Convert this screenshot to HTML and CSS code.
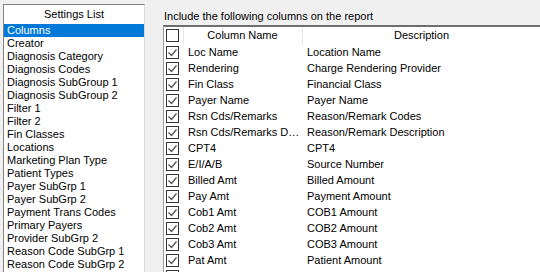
FILE: index.html
```html
<!DOCTYPE html>
<html lang="en">
<head>
    <meta charset="UTF-8">
    <title>Report Settings</title>
    <link rel="stylesheet" href="styles.css">
</head>
<body>
    <div class="window">
        <div class="settings-list">
            <div class="list-title">Settings List</div>
            <div class="list-item selected">Columns</div>
            <div class="list-item">Creator</div>
            <div class="list-item">Diagnosis Category</div>
            <div class="list-item">Diagnosis Codes</div>
            <div class="list-item">Diagnosis SubGroup 1</div>
            <div class="list-item">Diagnosis SubGroup 2</div>
            <div class="list-item">Filter 1</div>
            <div class="list-item">Filter 2</div>
            <div class="list-item">Fin Classes</div>
            <div class="list-item">Locations</div>
            <div class="list-item">Marketing Plan Type</div>
            <div class="list-item">Patient Types</div>
            <div class="list-item">Payer SubGrp 1</div>
            <div class="list-item">Payer SubGrp 2</div>
            <div class="list-item">Payment Trans Codes</div>
            <div class="list-item">Primary Payers</div>
            <div class="list-item">Provider SubGrp 2</div>
            <div class="list-item">Reason Code SubGrp 1</div>
            <div class="list-item">Reason Code SubGrp 2</div>
        </div>

        <div class="columns-panel">
            <div class="panel-label">Include the following columns on the report</div>
            <div class="grid">
                <div class="grid-row grid-header">
                    <div class="cell cell-check"><span class="checkbox"></span></div>
                    <div class="cell cell-name">Column Name</div>
                    <div class="cell cell-desc">Description</div>
                </div>
                <div id="rows"></div>
            </div>
        </div>
    </div>

    <script>
        const columns = [
            ['Loc Name', 'Location Name'],
            ['Rendering', 'Charge Rendering Provider'],
            ['Fin Class', 'Financial Class'],
            ['Payer Name', 'Payer Name'],
            ['Rsn Cds/Remarks', 'Reason/Remark Codes'],
            ['Rsn Cds/Remarks Description', 'Reason/Remark Description'],
            ['CPT4', 'CPT4'],
            ['E/I/A/B', 'Source Number'],
            ['Billed Amt', 'Billed Amount'],
            ['Pay Amt', 'Payment Amount'],
            ['Cob1 Amt', 'COB1 Amount'],
            ['Cob2 Amt', 'COB2 Amount'],
            ['Cob3 Amt', 'COB3 Amount'],
            ['Pat Amt', 'Patient Amount'],
            ['Sort Name', 'Sorting Name']
        ];

        const checkSvg = '<svg width="11" height="11" viewBox="0 0 11 11"><path d="M1.5 5.5 L4.5 8.5 L9.5 2.5" fill="none" stroke="#505050" stroke-width="1.2"/></svg>';

        const rowsBox = document.getElementById('rows');
        columns.forEach(([name, desc]) => {
            const row = document.createElement('div');
            row.className = 'grid-row';
            row.innerHTML = `<div class="cell cell-check"><span class="checkbox">${checkSvg}</span></div>` +
                `<div class="cell cell-name">${name}</div>` +
                `<div class="cell cell-desc">${desc}</div>`;
            rowsBox.appendChild(row);
        });
    </script>
</body>
</html>
```

FILE: styles.css
```css
* {
    margin: 0;
    padding: 0;
    box-sizing: border-box;
}

body {
    font-family: 'Liberation Sans', Arial, sans-serif;
    font-size: 11px;
    color: #000;
    background-color: #f0f0f0;
    overflow: hidden;
}

.window {
    display: flex;
    height: 272px;
    padding: 4px 0 0 3px;
}

/* Liste kutusu */
.settings-list {
    width: 142px;
    height: 290px;
    background-color: #fff;
    border-top: 1px solid #828282;
    border-left: 1px solid #828282;
    border-right: 1px solid #dcdcdc;
    flex-shrink: 0;
}

.list-title {
    height: 19px;
    line-height: 19px;
    text-align: center;
}

.list-item {
    height: 13px;
    line-height: 13px;
    padding-left: 3px;
    white-space: nowrap;
}

.list-item.selected {
    background-color: #0078d7;
    color: #fff;
}

/* Kolonlar paneli */
.columns-panel {
    flex: 1;
    margin-left: 17px;
    display: flex;
    flex-direction: column;
}

.panel-label {
    height: 21px;
    line-height: 20px;
    padding-left: 2px;
    padding-top: 2px;
}

.grid {
    flex: 1;
    background-color: #fff;
    border-top: 2px solid #6e6e6e;
    border-left: 1px solid #a0a0a0;
    margin-left: 1px;
}

.grid-row {
    display: flex;
    height: 16px;
    align-items: center;
}

.grid-header {
    height: 17px;
}

.cell {
    white-space: nowrap;
    overflow: hidden;
    text-overflow: ellipsis;
}

.cell-check {
    width: 19px;
    display: flex;
    align-items: center;
    padding-left: 2px;
    height: 100%;
}

.cell-name {
    width: 119px;
    padding-left: 5px;
    padding-right: 1px;
    height: 100%;
    line-height: 16px;
}

.cell-desc {
    flex: 1;
    padding-left: 5px;
    height: 100%;
    line-height: 16px;
}

.grid-header .cell-name,
.grid-header .cell-desc {
    text-align: center;
    padding-left: 0;
    line-height: 17px;
    border-left: 1px solid #e5e5e5;
}

.checkbox {
    width: 13px;
    height: 13px;
    border: 1px solid #333;
    background-color: #fff;
    display: flex;
    align-items: center;
    justify-content: center;
}
```
